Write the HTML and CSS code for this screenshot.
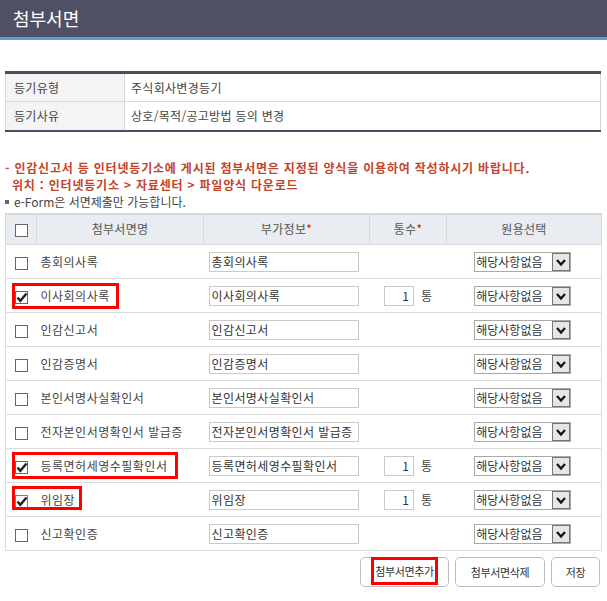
FILE: index.html
```html
<!DOCTYPE html>
<html lang="ko">
<head>
<meta charset="utf-8">
<title>첨부서면</title>
<link rel="stylesheet" href="styles.css">
</head>
<body>
<div class="titlebar"><h1>첨부서면</h1></div>
<div class="wrap">
  <table class="info">
    <tr><th>등기유형</th><td>주식회사변경등기</td></tr>
    <tr><th>등기사유</th><td>상호/목적/공고방법 등의 변경</td></tr>
  </table>

  <div class="warn">
    <p class="wl">- 인감신고서 등 인터넷등기소에 게시된 첨부서면은 지정된 양식을 이용하여 작성하시기 바랍니다.</p>
    <p class="wl indent">위치 : 인터넷등기소 &gt; 자료센터 &gt; 파일양식 다운로드</p>
  </div>
  <p class="note"><span class="sq"></span>e-Form은 서면제출만 가능합니다.</p>

  <table class="docs">
    <colgroup><col class="c1"><col class="c2"><col class="c3"><col class="c4"><col class="c5"></colgroup>
    <thead>
      <tr><th><span class="cb"></span></th><th>첨부서면명</th><th>부가정보<span class="req">*</span></th><th>통수<span class="req">*</span></th><th>원용선택</th></tr>
    </thead>
    <tbody>
      <tr>
        <td class="cbcell"><span class="cb"></span></td>
        <td class="name">총회의사록</td>
        <td class="extra"><input class="txt" type="text" value="총회의사록"></td>
        <td class="cnt"></td>
        <td class="sel"><span class="select"><span class="sv">해당사항없음</span><span class="arr"><svg width="16" height="16" viewBox="0 0 16 16"><path d="M4 6 L8 10.5 L12 6" fill="none" stroke="#111" stroke-width="2.2"/></svg></span></span></td>
      </tr>
      <tr>
        <td class="cbcell"><span class="cb"><svg width="13" height="13" viewBox="0 0 13 13"><path d="M2.5 6.5 L5.3 9.8 L11.5 2.5" fill="none" stroke="#222" stroke-width="2.4"/></svg></span><span class="mark mark-a"></span></td>
        <td class="name">이사회의사록</td>
        <td class="extra"><input class="txt" type="text" value="이사회의사록"></td>
        <td class="cnt"><input class="num" type="text" value="1"><span class="unit">통</span></td>
        <td class="sel"><span class="select"><span class="sv">해당사항없음</span><span class="arr"><svg width="16" height="16" viewBox="0 0 16 16"><path d="M4 6 L8 10.5 L12 6" fill="none" stroke="#111" stroke-width="2.2"/></svg></span></span></td>
      </tr>
      <tr>
        <td class="cbcell"><span class="cb"></span></td>
        <td class="name">인감신고서</td>
        <td class="extra"><input class="txt" type="text" value="인감신고서"></td>
        <td class="cnt"></td>
        <td class="sel"><span class="select"><span class="sv">해당사항없음</span><span class="arr"><svg width="16" height="16" viewBox="0 0 16 16"><path d="M4 6 L8 10.5 L12 6" fill="none" stroke="#111" stroke-width="2.2"/></svg></span></span></td>
      </tr>
      <tr>
        <td class="cbcell"><span class="cb"></span></td>
        <td class="name">인감증명서</td>
        <td class="extra"><input class="txt" type="text" value="인감증명서"></td>
        <td class="cnt"></td>
        <td class="sel"><span class="select"><span class="sv">해당사항없음</span><span class="arr"><svg width="16" height="16" viewBox="0 0 16 16"><path d="M4 6 L8 10.5 L12 6" fill="none" stroke="#111" stroke-width="2.2"/></svg></span></span></td>
      </tr>
      <tr>
        <td class="cbcell"><span class="cb"></span></td>
        <td class="name">본인서명사실확인서</td>
        <td class="extra"><input class="txt" type="text" value="본인서명사실확인서"></td>
        <td class="cnt"></td>
        <td class="sel"><span class="select"><span class="sv">해당사항없음</span><span class="arr"><svg width="16" height="16" viewBox="0 0 16 16"><path d="M4 6 L8 10.5 L12 6" fill="none" stroke="#111" stroke-width="2.2"/></svg></span></span></td>
      </tr>
      <tr>
        <td class="cbcell"><span class="cb"></span></td>
        <td class="name">전자본인서명확인서 발급증</td>
        <td class="extra"><input class="txt" type="text" value="전자본인서명확인서 발급증"></td>
        <td class="cnt"></td>
        <td class="sel"><span class="select"><span class="sv">해당사항없음</span><span class="arr"><svg width="16" height="16" viewBox="0 0 16 16"><path d="M4 6 L8 10.5 L12 6" fill="none" stroke="#111" stroke-width="2.2"/></svg></span></span></td>
      </tr>
      <tr>
        <td class="cbcell"><span class="cb"><svg width="13" height="13" viewBox="0 0 13 13"><path d="M2.5 6.5 L5.3 9.8 L11.5 2.5" fill="none" stroke="#222" stroke-width="2.4"/></svg></span><span class="mark mark-b"></span></td>
        <td class="name">등록면허세영수필확인서</td>
        <td class="extra"><input class="txt" type="text" value="등록면허세영수필확인서"></td>
        <td class="cnt"><input class="num" type="text" value="1"><span class="unit">통</span></td>
        <td class="sel"><span class="select"><span class="sv">해당사항없음</span><span class="arr"><svg width="16" height="16" viewBox="0 0 16 16"><path d="M4 6 L8 10.5 L12 6" fill="none" stroke="#111" stroke-width="2.2"/></svg></span></span></td>
      </tr>
      <tr>
        <td class="cbcell"><span class="cb cb-focus"><svg width="13" height="13" viewBox="0 0 13 13"><path d="M2.5 6.5 L5.3 9.8 L11.5 2.5" fill="none" stroke="#222" stroke-width="2.4"/></svg></span><span class="mark mark-c"></span></td>
        <td class="name">위임장</td>
        <td class="extra"><input class="txt" type="text" value="위임장"></td>
        <td class="cnt"><input class="num" type="text" value="1"><span class="unit">통</span></td>
        <td class="sel"><span class="select"><span class="sv">해당사항없음</span><span class="arr"><svg width="16" height="16" viewBox="0 0 16 16"><path d="M4 6 L8 10.5 L12 6" fill="none" stroke="#111" stroke-width="2.2"/></svg></span></span></td>
      </tr>
      <tr>
        <td class="cbcell"><span class="cb"></span></td>
        <td class="name">신고확인증</td>
        <td class="extra"><input class="txt" type="text" value="신고확인증"></td>
        <td class="cnt"></td>
        <td class="sel"><span class="select"><span class="sv">해당사항없음</span><span class="arr"><svg width="16" height="16" viewBox="0 0 16 16"><path d="M4 6 L8 10.5 L12 6" fill="none" stroke="#111" stroke-width="2.2"/></svg></span></span></td>
      </tr>
    </tbody>
  </table>

  <div class="btns">
    <button class="btn btn-add" type="button"><span class="hl">첨부서면추가</span></button>
    <button class="btn btn-del" type="button">첨부서면삭제</button>
    <button class="btn btn-save" type="button">저장</button>
  </div>
</div>
</body>
</html>
```

FILE: styles.css
```css
* { box-sizing: border-box; }
body {
  margin: 0;
  font-family: "Noto Sans CJK KR", "Noto Sans", sans-serif;
  font-size: 12px;
  color: #333;
  background: #fff;
}
.titlebar {
  height: 40px;
  background: #4f5063;
  border-bottom: 3px solid #5d9cd6;
  padding-left: 13px;
}
.titlebar h1 {
  margin: 0;
  font-size: 18px;
  font-weight: normal;
  color: #fff;
  line-height: 37px;
}
.wrap { padding: 0 6px 0 5px; }

.info {
  width: 100%;
  border-collapse: collapse;
  margin-top: 31px;
  border-top: 3px solid #4b4c5e;
  border-bottom: 2px solid #4b4c5e;
  border-left: 1px solid #d8d8d8;
  border-right: 1px solid #d8d8d8;
}
.info th, .info td {
  height: 29px;
  padding: 0;
  border-top: 1px solid #d8d8d8;
  line-height: 16px;
  vertical-align: middle;
  letter-spacing: 0.3px;
}
.info th {
  width: 119px;
  background: #f4f4f6;
  font-weight: normal;
  text-align: left;
  padding-left: 8px;
  border-right: 1px solid #d8d8d8;
  color: #444;
}
.info td { padding-left: 6px; color: #444; }

.warn {
  margin-top: 27px;
  color: #c4432b;
  font-weight: bold;
  font-size: 12px;
  letter-spacing: 0.8px;
}
.wl {
  margin: 0;
  line-height: 17px;
  white-space: nowrap;
}
.wl.indent { padding-left: 7px; }
.note {
  margin: 0;
  line-height: 17px;
  color: #444;
}
.note .sq {
  display: inline-block;
  width: 4px;
  height: 4px;
  background: #666;
  margin: 0 5px 2px 0;
  vertical-align: middle;
}

.docs {
  width: 100%;
  border-collapse: collapse;
  table-layout: fixed;
  margin-top: 3px;
  border-left: 1px solid #dcdcdc;
  border-right: 1px solid #dcdcdc;
}
.docs .c1 { width: 31px; }
.docs .c2 { width: 167px; }
.docs .c3 { width: 166px; }
.docs .c4 { width: 77px; }
.docs .c5 { width: 155px; }
.docs th {
  height: 31px;
  padding: 0;
  background: #e9edf1;
  border: 1px solid #d6d9dd;
  border-top: 2px solid #d6d9dd;
  font-weight: normal;
  color: #555;
  line-height: 16px;
  letter-spacing: 0.3px;
}
.docs .req { color: #f00; }
.docs td {
  height: 34px;
  padding: 0;
  border-bottom: 1px solid #dcdcdc;
  vertical-align: middle;
  line-height: 16px;
  color: #444;
}
.docs .cbcell { position: relative; text-align: center; padding-left: 1px; }
.cb {
  display: inline-block;
  width: 13px;
  height: 13px;
  border: 1px solid #666;
  background: #fff;
  vertical-align: middle;
  position: relative;
}
.cb svg { position: absolute; left: -1px; top: -1px; overflow: visible; }
.cb-focus { border-color: #3a8ee0; }
.mark {
  position: absolute;
  left: 6px;
  top: 4px;
  height: 26px;
  border: 3px solid #f00;
}
.mark-a { width: 107px; }
.mark-b { width: 166px; top: 3px; height: 27px; }
.mark-c { width: 70px; top: 3px; height: 24px; }

.docs .name { padding-left: 4px; white-space: nowrap; letter-spacing: 0.5px; }
.docs .extra { padding-left: 5px; }
.txt {
  display: block;
  width: 150px;
  height: 20px;
  border: 1px solid #c9c9c9;
  padding: 0 0 0 2px;
  font: inherit;
  letter-spacing: 0.4px;
  color: #333;
  line-height: 18px;
  background: #fff;
}
.docs .cnt { text-align: center; white-space: nowrap; }
.num {
  width: 30px;
  height: 20px;
  border: 1px solid #c9c9c9;
  padding: 0 4px 0 0;
  font: inherit;
  text-align: right;
  color: #333;
  vertical-align: middle;
}
.unit { margin-left: 7px; vertical-align: middle; }
.docs .sel { text-align: center; }
.select {
  display: inline-flex;
  align-items: center;
  width: 97px;
  height: 20px;
  border: 1px solid #a9a9a9;
  background: #fff;
  vertical-align: middle;
  margin-left: -2px;
}
.sv { flex: 1; text-align: left; padding-left: 1px; color: #333; white-space: nowrap; overflow: hidden; }
.arr {
  width: 18px;
  height: 18px;
  border: 1px solid #777;
  background: #e6e6e6;
  display: flex;
  align-items: center;
  justify-content: center;
}

.btns {
  display: flex;
  justify-content: flex-end;
  gap: 6px;
  margin-top: 6px;
  padding-right: 1px;
}
.btn {
  height: 30px;
  border: 1px solid #bdbdbd;
  border-radius: 5px;
  background: #fff;
  font-family: inherit;
  font-size: 11px;
  letter-spacing: -0.4px;
  color: #333;
  padding: 0;
}
.btn-add { width: 89px; }
.btn-del { width: 90px; }
.btn-save { width: 49px; }
.hl {
  display: inline-block;
  outline: 3px solid #f00;
  padding: 3px 1px;
  margin-top: -6px;
}
```
